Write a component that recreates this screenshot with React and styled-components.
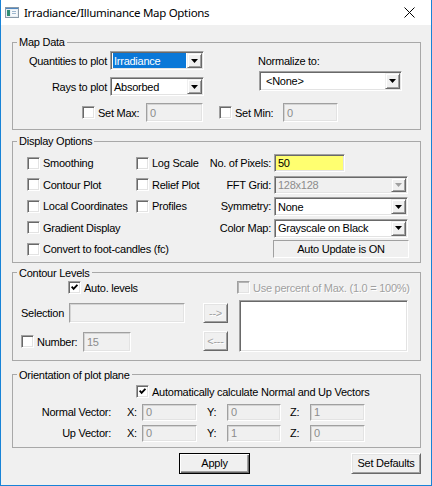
import styled, { createGlobalStyle } from "styled-components";

const GlobalStyle = createGlobalStyle`
  html, body { margin: 0; padding: 0; background: #ffffff; }
  * { box-sizing: border-box; }
`;

const Window = styled.div`
  width: 432px;
  height: 486px;
  display: flex;
  flex-direction: column;
  background: #f0f0f0;
  border: 1px solid #1883d7;
  border-top: none;
  font-family: "Liberation Sans", Arial, sans-serif;
  font-size: 11px;
  letter-spacing: -0.25px;
  color: #000;
  overflow: hidden;
`;

const TitleBar = styled.div`
  height: 25px;
  flex: none;
  display: flex;
  align-items: center;
  background: #ffffff;
  padding-left: 4px;
`;

const Title = styled.span`
  margin-left: 5px;
  font-family: "Noto Sans", "Open Sans", sans-serif;
  font-size: 11.5px;
  letter-spacing: -0.3px;
`;

const Close = styled.span`
  margin-left: auto;
  margin-right: 16px;
  display: flex;
`;

const Body = styled.div`
  flex: 1;
  display: flex;
  flex-direction: column;
  padding: 10px 10px 0 11px;
`;

const Group = styled.fieldset`
  margin: ${(p) => p.$mt || 0}px 0 0;
  padding: 0;
  min-width: 0;
  border: 1px solid #a8a8a8;
`;

const Legend = styled.legend`
  margin-left: 4px;
  padding: 0 2px;
  line-height: 14px;
`;

/* ---------- controls ---------- */

const Box = styled.span`
  width: 13px;
  height: 13px;
  flex: none;
  display: inline-flex;
  align-items: center;
  justify-content: center;
  border: 1px solid;
  border-color: #a0a0a0 #ffffff #ffffff #a0a0a0;
  box-shadow: inset 1px 1px 0 ${(p) => (p.$disabled ? "#b4b4b4" : "#696969")},
    inset -1px -1px 0 #e3e3e3;
  background: ${(p) => (p.$disabled ? "#f0f0f0" : "#ffffff")};
`;

const CheckLabel = styled.label`
  display: flex;
  align-items: center;
  gap: 3px;
  height: ${(p) => p.$h || 14}px;
  width: ${(p) => (p.$w ? `${p.$w}px` : "auto")};
  margin-left: ${(p) => p.$ml || 0}px;
  color: ${(p) => (p.$disabled ? "#a0a0a0" : "#000")};
  text-shadow: ${(p) => (p.$disabled ? "1px 1px 0 #ffffff" : "none")};
  white-space: nowrap;
  flex: none;
`;

const Check = ({ label, checked, disabled, w, h, ml, span }) => (
  <CheckLabel $w={w} $h={h} $ml={ml} $disabled={disabled} style={span ? { gridColumn: span } : undefined}>
    <Box $disabled={disabled}>
      {checked && (
        <svg width="7" height="7" viewBox="0 0 7 7">
          <path d="M0.6 2.6 L2.6 4.8 L6.4 0.8" fill="none" stroke="#000" strokeWidth="1.9" />
        </svg>
      )}
    </Box>
    {label}
  </CheckLabel>
);

const ComboBox = styled.div`
  width: ${(p) => p.$w}px;
  height: ${(p) => p.$h}px;
  display: flex;
  padding: 1px;
  border: 1px solid;
  border-color: #a0a0a0 #ffffff #ffffff #a0a0a0;
  box-shadow: inset 1px 1px 0 #696969, inset -1px -1px 0 #e3e3e3;
  background: ${(p) => (p.$disabled ? "#f0f0f0" : "#ffffff")};
  flex: none;
`;

const ComboText = styled.div`
  flex: 1;
  min-width: 0;
  margin: 0 1px;
  padding-left: ${(p) => p.$indent || 1}px;
  display: flex;
  align-items: center;
  white-space: nowrap;
  overflow: hidden;
  background: ${(p) => (p.$selected ? "#0a78d8" : "transparent")};
  color: ${(p) => (p.$selected ? "#ffffff" : p.$disabled ? "#8c8c8c" : "#000")};
`;

const ArrowButton = styled.div`
  width: 15px;
  flex: none;
  display: flex;
  align-items: center;
  justify-content: center;
  background: #f0f0f0;
  border: 1px solid;
  border-color: #f0f0f0 #696969 #696969 #f0f0f0;
  box-shadow: inset 1px 1px 0 #ffffff, inset -1px -1px 0 #a0a0a0;
`;

const Combo = ({ w, h, value, selected, disabled, indent }) => (
  <ComboBox $w={w} $h={h} $disabled={disabled}>
    <ComboText $selected={selected} $disabled={disabled} $indent={indent}>
      {value}
    </ComboText>
    <ArrowButton>
      <svg width="7" height="4" viewBox="0 0 7 4">
        <path d="M0 0h7l-3.5 4z" fill={disabled ? "#a0a0a0" : "#000"} />
      </svg>
    </ArrowButton>
  </ComboBox>
);

const Field = styled.div`
  width: ${(p) => p.$w}px;
  height: ${(p) => p.$h}px;
  flex: none;
  display: flex;
  align-items: center;
  padding-left: 3px;
  border: 1px solid;
  border-color: #a0a0a0 #ffffff #ffffff #a0a0a0;
  box-shadow: inset 1px 1px 0 ${(p) => (p.$bg ? "#696969" : "#d4d4d4")},
    inset -1px -1px 0 #e3e3e3;
  background: ${(p) => p.$bg || "#f0f0f0"};
  color: ${(p) => (p.$bg ? "#000" : "#8c8c8c")};
`;

const ListBox = styled.div`
  width: 169px;
  height: 52px;
  border: 1px solid;
  border-color: #a0a0a0 #ffffff #ffffff #a0a0a0;
  box-shadow: inset 1px 1px 0 #696969, inset -1px -1px 0 #e3e3e3;
  background: #ffffff;
`;

const Button = styled.button`
  width: ${(p) => p.$w}px;
  height: ${(p) => p.$h}px;
  margin-left: ${(p) => (p.$ml === "auto" ? "auto" : `${p.$ml || 0}px`)};
  padding: 0;
  font: inherit;
  letter-spacing: inherit;
  background: #f0f0f0;
  color: ${(p) => (p.disabled ? "#a0a0a0" : "#000")};
  text-shadow: ${(p) => (p.disabled ? "1px 1px 0 #ffffff" : "none")};
  border: 1px solid;
  border-color: ${(p) => (p.$default ? "#000 #000 #000 #000" : "#ffffff #696969 #696969 #ffffff")};
  box-shadow: ${(p) =>
    p.$default
      ? "inset 1px 1px 0 #ffffff, inset -1px -1px 0 #696969, inset -2px -2px 0 #a0a0a0"
      : "inset 1px 1px 0 #e3e3e3, inset -1px -1px 0 #a0a0a0"};
  flex: none;
`;

const Static = styled.div`
  height: ${(p) => p.$h || 18}px;
  display: flex;
  align-items: center;
  justify-content: ${(p) => (p.$right ? "flex-end" : "flex-start")};
  padding-right: ${(p) => p.$pr || 0}px;
  padding-left: ${(p) => p.$pl || 0}px;
  white-space: nowrap;
`;

/* ---------- Map Data ---------- */

const MapBody = styled.div`
  padding: 2px 0 7px 0;
`;

const MapTop = styled.div`
  display: flex;
  align-items: flex-start;
`;

const PairGrid = styled.div`
  display: grid;
  grid-template-columns: 94px 94px;
  grid-auto-rows: 19px;
  column-gap: 3px;
  row-gap: 7px;
`;

const NormalizeCol = styled.div`
  display: flex;
  flex-direction: column;
  margin-left: 55px;
`;

const NormLabel = styled.div`
  margin: 4px 0 3px -1px;
  line-height: 13px;
`;

const LimitRow = styled.div`
  display: flex;
  align-items: center;
  height: 19px;
  margin-top: 7px;
  padding-left: 69px;
`;

/* ---------- Display Options ---------- */

const OptionsGrid = styled.div`
  display: grid;
  grid-template-columns: 109px 69px 69px 134px;
  grid-auto-rows: 21.5px;
  align-items: start;
  padding: 6px 0 0 14px;
`;

const AutoUpdate = styled.div`
  width: 136px;
  height: 18px;
  margin-left: -1px;
  display: flex;
  align-items: center;
  justify-content: center;
  border: 1px solid;
  border-color: #a0a0a0 #ffffff #ffffff #a0a0a0;
`;

/* ---------- Contour Levels ---------- */

const ContourGrid = styled.div`
  display: grid;
  grid-template-columns: 182px 36px 169px;
  grid-template-rows: 16px 52px;
  row-gap: 4px;
  align-items: center;
  padding: 0 0 8px 8px;
`;

const StackCol = styled.div`
  display: flex;
  flex-direction: column;
  align-self: start;
  gap: ${(p) => p.$gap}px;
  padding-top: 3px;
`;

const FieldRow = styled.div`
  display: flex;
  align-items: center;
`;

/* ---------- Orientation ---------- */

const AutoRow = styled.div`
  display: flex;
  margin: 3px 0 0 123px;
`;

const VectorGrid = styled.div`
  display: grid;
  grid-template-columns: 114px 15px 55px 30px 54px 29px 55px;
  grid-auto-rows: 17px;
  row-gap: 4px;
  margin-top: 5px;
  padding-bottom: 5px;
`;

const ButtonRow = styled.div`
  display: flex;
  margin-top: 5px;
`;

const AppIcon = () => (
  <svg width="14" height="11" viewBox="0 0 14 11">
    <rect x="0.5" y="0.5" width="13" height="10" fill="#e8eef4" stroke="#8a9aa8" />
    <rect x="1" y="1" width="12" height="1" fill="#4f86c0" />
    <rect x="2" y="3" width="3" height="6" fill="#2f8c74" />
    <rect x="6" y="3" width="6" height="6" fill="#f7f9fb" />
    <rect x="7" y="4" width="4" height="1" fill="#9fb8cf" />
    <rect x="7" y="6" width="4" height="1" fill="#9fb8cf" />
  </svg>
);

export default function App() {
  return (
    <>
      <GlobalStyle />
      <Window>
        <TitleBar>
          <AppIcon />
          <Title>Irradiance/Illuminance Map Options</Title>
          <Close>
            <svg width="11" height="11" viewBox="0 0 11 11">
              <path d="M0.5 0.5 L10.5 10.5 M10.5 0.5 L0.5 10.5" stroke="#000" strokeWidth="1" />
            </svg>
          </Close>
        </TitleBar>

        <Body>
          <Group>
            <Legend>Map Data</Legend>
            <MapBody>
              <MapTop>
                <PairGrid>
                  <Static $h={19} $right>Quantities to plot</Static>
                  <Combo w={94} h={19} value="Irradiance" selected />
                  <Static $h={19} $right>Rays to plot</Static>
                  <Combo w={94} h={19} value="Absorbed" />
                </PairGrid>
                <NormalizeCol>
                  <NormLabel>Normalize to:</NormLabel>
                  <Combo w={143} h={20} value="<None>" indent={4} />
                </NormalizeCol>
              </MapTop>
              <LimitRow>
                <Check label="Set Max:" w={64} />
                <Field $w={57} $h={19}>0</Field>
                <Check label="Set Min:" w={64} ml={16} />
                <Field $w={55} $h={19}>0</Field>
              </LimitRow>
            </MapBody>
          </Group>

          <Group $mt={4}>
            <Legend>Display Options</Legend>
            <OptionsGrid>
              <Check label="Smoothing" h={18} />
              <Check label="Log Scale" h={18} />
              <Static $right $pr={3}>No. of Pixels:</Static>
              <Field $w={71} $h={18} $bg="#ffff70">50</Field>

              <Check label="Contour Plot" h={18} />
              <Check label="Relief Plot" h={18} />
              <Static $right $pr={3}>FFT Grid:</Static>
              <Combo w={134} h={18} value="128x128" disabled />

              <Check label="Local Coordinates" h={18} />
              <Check label="Profiles" h={18} />
              <Static $right $pr={3}>Symmetry:</Static>
              <Combo w={134} h={19} value="None" />

              <Check label="Gradient Display" h={18} />
              <span />
              <Static $right $pr={3}>Color Map:</Static>
              <Combo w={134} h={19} value="Grayscale on Black" />

              <Check label="Convert to foot-candles (fc)" h={18} span="1 / 3" />
              <span />
              <AutoUpdate>Auto Update is ON</AutoUpdate>
            </OptionsGrid>
          </Group>

          <Group $mt={3}>
            <Legend>Contour Levels</Legend>
            <ContourGrid>
              <Check label="Auto. levels" checked ml={47} />
              <span />
              <Check label="Use percent of Max. (1.0 = 100%)" disabled ml={-2} />

              <StackCol $gap={9}>
                <FieldRow>
                  <Static $h={20} style={{ width: 48 }}>Selection</Static>
                  <Field $w={116} $h={20} />
                </FieldRow>
                <FieldRow>
                  <Check label="Number:" w={62} />
                  <Field $w={48} $h={20}>15</Field>
                </FieldRow>
              </StackCol>
              <StackCol $gap={8}>
                <Button $w={25} $h={20} disabled>--&gt;</Button>
                <Button $w={25} $h={20} disabled>&lt;---</Button>
              </StackCol>
              <ListBox />
            </ContourGrid>
          </Group>

          <Group $mt={7}>
            <Legend>Orientation of plot plane</Legend>
            <AutoRow>
              <Check label="Automatically calculate Normal and Up Vectors" checked />
            </AutoRow>
            <VectorGrid>
              <Static $h={17} $right $pr={16}>Normal Vector:</Static>
              <Static $h={17}>X:</Static>
              <Field $w={55} $h={17}>0</Field>
              <Static $h={17} $pl={10}>Y:</Static>
              <Field $w={54} $h={17}>0</Field>
              <Static $h={17} $pl={9}>Z:</Static>
              <Field $w={55} $h={17}>1</Field>

              <Static $h={17} $right $pr={16}>Up Vector:</Static>
              <Static $h={17}>X:</Static>
              <Field $w={55} $h={17}>0</Field>
              <Static $h={17} $pl={10}>Y:</Static>
              <Field $w={54} $h={17}>1</Field>
              <Static $h={17} $pl={9}>Z:</Static>
              <Field $w={55} $h={17}>0</Field>
            </VectorGrid>
          </Group>

          <ButtonRow>
            <Button $w={71} $h={21} $ml={167} $default>Apply</Button>
            <Button $w={70} $h={21} $ml="auto">Set Defaults</Button>
          </ButtonRow>
        </Body>
      </Window>
    </>
  );
}
